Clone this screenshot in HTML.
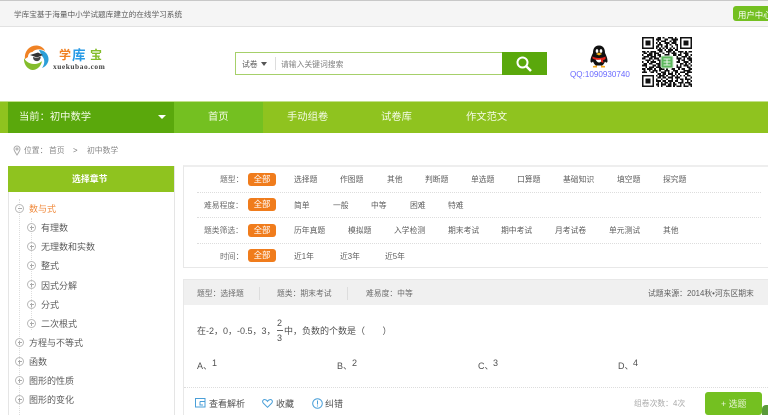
<!DOCTYPE html>
<html lang="zh"><head><meta charset="utf-8"><title>学库宝</title>
<style>
html,body{margin:0;padding:0;background:#fff}
#p{position:relative;width:768px;height:415px;overflow:hidden;background:#fff;font-family:"Liberation Sans","Noto Sans CJK SC",sans-serif;color:#5c5c5c;filter:blur(.3px)}
#p div,#p span,#p svg{position:absolute}
.t{font-size:7.8px;line-height:14px;height:14px;white-space:nowrap;margin-top:.5px}
.k{font-size:9px;color:#5c5c5c}
.f{color:#6c6c6c}
.pill{left:248px;width:28px;height:13px;background:#f07c1c;border-radius:3px;color:#fff;font-size:8.4px;line-height:13px;text-align:center}
.dot{left:197px;width:564px;border-top:1px dotted #ddd;height:0}
.ic{width:7px;height:7px;border:1px solid #bbb;border-radius:50%}
.ic:before{content:"";position:absolute;left:1.5px;right:1.5px;top:3px;height:1px;background:#aaa}
.ic.pl:after{content:"";position:absolute;top:1.5px;bottom:1.5px;left:3px;width:1px;background:#aaa}
.nav{font-size:10.3px;color:#f4fbe6;line-height:14px;top:111px;white-space:nowrap}
</style></head><body><div id="p">

<div style="left:0;top:0;width:768px;height:26px;background:#f5f5f5;border-bottom:1px solid #e2e2e2"></div>
<div style="left:0;top:0;width:768px;height:1px;background:#c8c8c8"></div>
<span class="t" style="left:14px;top:7px;color:#5c5c5c;font-size:7.65px">学库宝基于海量中小学试题库建立的在线学习系统</span>
<div style="left:733px;top:6px;width:40px;height:15px;background:#74c021;border-radius:3px"></div>
<span class="t" style="left:738px;top:7px;color:#fff;font-size:8.4px">用户中心</span>

<svg style="left:22px;top:44px" width="28" height="28" viewBox="0 0 28 28">
<path d="M3 15C2 7 8 1 15 1.500C19 2 22 4 23 7C19 4.500 13 5 10.500 8C8 8 6 10 6 13Z" fill="#f08224"/>
<path d="M17 6C23 6 27 11 26.500 16C26 20 23 23 20 24C23 20 23 15 20 12C19 10 18 8 17 6Z" fill="#2b9fd8"/>
<path d="M2 14C4 18 8 20 12 20C15 20 18 19 20 17C19 23 14 26.500 10 26C5 25 1.500 20 2 14Z" fill="#84bd2c"/>
<path d="M8 11L16 8.500L21 11L15 13.500Z" fill="#333"/><path d="M11 13C11 16 13 17.500 16 17C18 16.500 19 14 18.500 12.500L15 14Z" fill="#444"/>
</svg>
<span style="left:59px;top:47px;font-size:12px;line-height:17px;font-weight:bold;color:#f08224">学</span>
<span style="left:72px;top:47px;font-size:13.500px;line-height:17px;font-weight:bold;color:#2a9be6">库</span>
<span style="left:90px;top:47px;font-size:12px;line-height:17px;font-weight:bold;color:#84bd2c">宝</span>
<span style="left:53px;top:62px;font-family:'Liberation Serif',serif;font-size:7.400px;line-height:9px;font-weight:bold;color:#444;letter-spacing:.55px;white-space:nowrap">xuekubao.com</span>

<div style="left:235px;top:52px;width:267px;height:21px;border:1px solid #a6d06a;background:#fff"></div>
<div style="left:502px;top:52px;width:45px;height:23px;background:#5aa80c"></div>
<span class="t" style="left:242px;top:57px;color:#555">试卷</span>
<div style="left:261px;top:62px;width:0;height:0;border:3.500px solid transparent;border-top:4px solid #555;border-bottom:0"></div>
<div style="left:275px;top:57px;width:1px;height:13px;background:#ddd"></div>
<span class="t" style="left:281px;top:57px;color:#808080">请输入关键词搜索</span>
<svg style="left:515px;top:55px" width="18" height="18" viewBox="0 0 18 18" fill="none" stroke="#fff"><circle cx="7.500" cy="7.500" r="5" stroke-width="2"/><path d="M11 11L16 16" stroke-width="2.500"/></svg>

<svg style="left:589px;top:45px" width="20" height="23" viewBox="0 0 20 23">
<path d="M10 .5C5.500 .5 4 4 4 8C3 10 1.500 13 1.500 16C1.500 18 3 18 4 16.500C5 19 6 20 7 20.500L13 20.500C14 20 15 19 16 16.500C17 18 18.500 18 18.500 16C18.500 13 17 10 16 8C16 4 14.500 .5 10 .5Z" fill="#111"/>
<path d="M6 13C8 19 12 19 14 13Z" fill="#fff"/>
<path d="M3.500 11.500C7 13.500 13 13.500 16.500 11.500L16.500 14C15 15 14.500 15 14 15L14.500 18L12 17L12 14.500C10 15 8 15 6 14.500C5 14.500 4 13.500 3.500 13.500Z" fill="#e2231a"/>
<ellipse cx="8" cy="6" rx="1.300" ry="1.900" fill="#fff"/><ellipse cx="12" cy="6" rx="1.300" ry="1.900" fill="#fff"/>
<path d="M7 9L10 7.500L13 9L10 10.500Z" fill="#f5b31a"/>
<path d="M4 21L8 20.500L8 22.500L4 22.500ZM12 20.500L16 21L16 22.500L12 22.500Z" fill="#f5a81a"/>
</svg>
<span style="left:570px;top:68px;font-size:8.100px;line-height:14px;color:#6a6aff;white-space:nowrap">QQ:1090930740</span>

<svg style="left:642px;top:37px" width="50" height="50" viewBox="0 0 29 29" shape-rendering="crispEdges">
<rect width="29" height="29" fill="#fff"/>
<g fill="none" stroke="#111" stroke-width="1">
<path d="M0 .5h7M9 .5h2M12 .5h1M15 .5h3M19 .5h1M22 .5h7M0 1.500h1M6 1.500h1M8 1.500h3M13 1.500h2M17 1.500h4M22 1.500h1M28 1.500h1M0 2.500h1M2 2.500h3M6 2.500h1M9 2.500h1M11 2.500h3M16 2.500h1M18 2.500h2M22 2.500h1M24 2.500h3M28 2.500h1M0 3.500h1M2 3.500h3M6 3.500h1M8 3.500h1M10 3.500h1M13 3.500h3M17 3.500h3M22 3.500h1M24 3.500h3M28 3.500h1M0 4.500h1M2 4.500h3M6 4.500h1M9 4.500h3M14 4.500h1M16 4.500h1M19 4.500h2M22 4.500h1M24 4.500h3M28 4.500h1M0 5.500h1M6 5.500h1M8 5.500h2M11 5.500h1M13 5.500h2M17 5.500h1M20 5.500h1M22 5.500h1M28 5.500h1M0 6.500h7M8 6.500h1M10 6.500h1M12 6.500h1M14 6.500h1M16 6.500h1M18 6.500h1M20 6.500h1M22 6.500h7"/>
<path d="M9 7.500h3M13 7.500h1M15 7.500h3M19 7.500h2M0 8.500h2M3 8.500h1M5 8.500h3M10 8.500h2M14 8.500h3M18 8.500h1M21 8.500h3M25 8.500h1M27 8.500h2M1 9.500h2M4 9.500h2M7 9.500h3M12 9.500h1M15 9.500h1M17 9.500h3M22 9.500h1M24 9.500h3M0 10.500h1M3 10.500h3M7 10.500h1M9 10.500h2M13 10.500h3M18 10.500h2M21 10.500h2M25 10.500h2M28 10.500h1M1 11.500h3M5 11.500h1M6 11.500h2M10 11.500h1M15 11.500h2M20 11.500h1M23 11.500h3M27 11.500h1M0 12.500h2M4 12.500h2M7 12.500h3M20 12.500h3M24 12.500h1M26 12.500h3M2 13.500h3M6 13.500h1M9 13.500h2M21 13.500h1M23 13.500h2M27 13.500h2M0 14.500h1M3 14.500h1M5 14.500h3M10 14.500h1M20 14.500h2M24 14.500h3M28 14.500h1M1 15.500h2M4 15.500h2M8 15.500h3M22 15.500h2M25 15.500h1M27 15.500h1M0 16.500h3M6 16.500h2M9 16.500h2M20 16.500h1M22 16.500h1M24 16.500h3M28 16.500h1M2 17.500h1M4 17.500h3M8 17.500h3M12 17.500h1M15 17.500h2M20 17.500h3M26 17.500h2M0 18.500h2M3 18.500h3M7 18.500h1M10 18.500h3M14 18.500h1M17 18.500h2M21 18.500h1M23 18.500h2M27 18.500h2M1 19.500h1M4 19.500h1M6 19.500h3M10 19.500h1M13 19.500h3M18 19.500h3M24 19.500h4M0 20.500h3M5 20.500h2M8 20.500h1M11 20.500h3M15 20.500h1M17 20.500h1M19 20.500h2M22 20.500h3M26 20.500h3"/>
<path d="M9 21.500h2M12 21.500h2M15 21.500h3M19 21.500h1M21 21.500h1M25 21.500h2M0 22.500h7M8 22.500h1M10 22.500h3M14 22.500h1M17 22.500h2M20 22.500h1M22 22.500h1M24 22.500h1M26 22.500h2M0 23.500h1M6 23.500h1M9 23.500h2M12 23.500h2M15 23.500h3M19 23.500h3M25 23.500h1M28 23.500h1M0 24.500h1M2 24.500h3M6 24.500h1M8 24.500h1M11 24.500h1M14 24.500h1M17 24.500h1M20 24.500h1M22 24.500h2M25 24.500h3M0 25.500h1M2 25.500h3M6 25.500h1M8 25.500h3M12 25.500h2M15 25.500h3M19 25.500h2M23 25.500h1M26 25.500h1M28 25.500h1M0 26.500h1M2 26.500h3M6 26.500h1M9 26.500h1M11 26.500h1M13 26.500h2M16 26.500h1M18 26.500h1M21 26.500h3M25 26.500h3M0 27.500h1M6 27.500h1M8 27.500h2M11 27.500h3M15 27.500h2M18 27.500h2M22 27.500h1M24 27.500h1M27 27.500h2M0 28.500h7M9 28.500h1M11 28.500h1M14 28.500h3M18 28.500h1M20 28.500h3M24 28.500h3M28 28.500h1"/>
</g>
<rect x="11" y="11" width="7" height="7" rx="1" fill="#5cb85c" stroke="#cfe8cf" stroke-width=".4"/>
<path d="M12.500 12.800h4M12.500 14.500h4M12.500 16.200h4M14.500 12.500v4" stroke="#e6f5e6" stroke-width=".6" fill="none"/>
</svg>

<div style="left:0;top:101px;width:768px;height:32px;background:#8fc31f;border-top:1px solid #c2e08a;box-sizing:border-box"></div>
<div style="left:8px;top:102px;width:166px;height:31px;background:#5aa80c"></div>
<div style="left:174px;top:102px;width:89px;height:31px;background:#74c021"></div>
<span class="nav" style="left:19px">当前：初中数学</span>
<div style="left:158px;top:115px;width:0;height:0;border:4px solid transparent;border-top:4.500px solid #fff;border-bottom:0"></div>
<span class="nav" style="left:208px">首页</span>
<span class="nav" style="left:287px">手动组卷</span>
<span class="nav" style="left:381px">试卷库</span>
<span class="nav" style="left:466px">作文范文</span>

<svg style="left:13px;top:145px" width="8" height="11" viewBox="0 0 8 11" fill="none" stroke="#aaa"><path d="M4 10C2 7 1 5.500 1 4A3 3 0 0 1 7 4C7 5.500 6 7 4 10Z"/><circle cx="4" cy="4" r="1"/></svg>
<span class="t f" style="left:24px;top:143px;color:#888">位置：</span>
<span class="t f" style="left:49px;top:143px;color:#888">首页</span>
<span class="t" style="left:73px;top:143px;color:#777">&gt;</span>
<span class="t f" style="left:87px;top:143px;color:#888">初中数学</span>

<div style="left:8px;top:166px;width:165px;height:260px;border:1px solid #e5e5e5;box-sizing:content-box"></div>
<div style="left:8px;top:166px;width:166px;height:26px;background:#8fc31f"></div>
<span style="left:72px;top:172px;font-size:8.900px;line-height:14px;color:#fff;font-weight:bold;white-space:nowrap">选择章节</span>
<div style="left:19px;top:199px;height:216px;border-left:1px dotted #ddd"></div>
<div style="left:31px;top:218px;height:112px;border-left:1px dotted #ddd"></div>

<div class="ic" style="left:15px;top:204px"></div><span class="t k" style="left:29px;top:201px;color:#f08a3c">数与式</span>
<div class="ic pl" style="left:27px;top:223px"></div><span class="t k" style="left:41px;top:220px">有理数</span>
<div class="ic pl" style="left:27px;top:242px"></div><span class="t k" style="left:41px;top:239px">无理数和实数</span>
<div class="ic pl" style="left:27px;top:261px"></div><span class="t k" style="left:41px;top:258px">整式</span>
<div class="ic pl" style="left:27px;top:280px"></div><span class="t k" style="left:41px;top:278px">因式分解</span>
<div class="ic pl" style="left:27px;top:300px"></div><span class="t k" style="left:41px;top:297px">分式</span>
<div class="ic pl" style="left:27px;top:319px"></div><span class="t k" style="left:41px;top:316px">二次根式</span>
<div class="ic pl" style="left:15px;top:338px"></div><span class="t k" style="left:29px;top:335px">方程与不等式</span>
<div class="ic pl" style="left:15px;top:357px"></div><span class="t k" style="left:29px;top:354px">函数</span>
<div class="ic pl" style="left:15px;top:376px"></div><span class="t k" style="left:29px;top:373px">图形的性质</span>
<div class="ic pl" style="left:15px;top:395px"></div><span class="t k" style="left:29px;top:392px">图形的变化</span>

<div style="left:183px;top:165px;width:590px;height:103px;border:1px solid #e8e8e8;border-top:2px solid #eee;box-sizing:border-box"></div>
<span class="t f" style="left:220px;top:172px">题型：</span>
<div class="pill" style="top:173px">全部</div>
<span class="t" style="left:294px;top:172px">选择题</span><span class="t" style="left:340px;top:172px">作图题</span><span class="t" style="left:387px;top:172px">其他</span><span class="t" style="left:425px;top:172px">判断题</span><span class="t" style="left:471px;top:172px">单选题</span><span class="t" style="left:517px;top:172px">口算题</span><span class="t" style="left:563px;top:172px">基础知识</span><span class="t" style="left:617px;top:172px">填空题</span><span class="t" style="left:663px;top:172px">探究题</span>
<div class="dot" style="top:192px"></div>
<span class="t f" style="left:204px;top:198px">难易程度：</span>
<div class="pill" style="top:198px">全部</div>
<span class="t" style="left:294px;top:198px">简单</span><span class="t" style="left:333px;top:198px">一般</span><span class="t" style="left:371px;top:198px">中等</span><span class="t" style="left:410px;top:198px">困难</span><span class="t" style="left:448px;top:198px">特难</span>
<div class="dot" style="top:217px"></div>
<span class="t f" style="left:204px;top:223px">题类筛选：</span>
<div class="pill" style="top:224px">全部</div>
<span class="t" style="left:294px;top:223px">历年真题</span><span class="t" style="left:348px;top:223px">模拟题</span><span class="t" style="left:394px;top:223px">入学检测</span><span class="t" style="left:448px;top:223px">期末考试</span><span class="t" style="left:501px;top:223px">期中考试</span><span class="t" style="left:555px;top:223px">月考试卷</span><span class="t" style="left:609px;top:223px">单元测试</span><span class="t" style="left:663px;top:223px">其他</span>
<div class="dot" style="top:243px"></div>
<span class="t f" style="left:220px;top:249px">时间：</span>
<div class="pill" style="top:249px">全部</div>
<span class="t" style="left:294px;top:249px">近1年</span><span class="t" style="left:340px;top:249px">近3年</span><span class="t" style="left:385px;top:249px">近5年</span>

<div style="left:183px;top:279px;width:590px;height:150px;border:1px solid #e8e8e8;box-sizing:border-box"></div>
<div style="left:184px;top:280px;width:584px;height:25px;background:#f0f0f0"></div>
<span class="t f" style="left:197px;top:286px">题型：选择题</span>
<div style="left:259px;top:287px;width:1px;height:13px;background:#ddd"></div>
<span class="t f" style="left:277px;top:286px">题类：期末考试</span>
<div style="left:347px;top:287px;width:1px;height:13px;background:#ddd"></div>
<span class="t f" style="left:366px;top:286px">难易度：中等</span>
<span class="t" style="left:648px;top:286px;color:#5c5c5c">试题来源：2014秋•河东区期末</span>

<span class="t k" style="left:197px;top:323px;color:#505050">在-2，0，-0.5，3，</span>
<span class="t k" style="left:277px;top:315px;color:#505050">2</span>
<div style="left:277px;top:330px;width:6px;height:1px;background:#666"></div>
<span class="t k" style="left:277px;top:330px;color:#505050">3</span>
<span class="t k" style="left:284px;top:323px;color:#505050">中，负数的个数是（&nbsp; &nbsp; &nbsp; &nbsp;）</span>

<span class="t k" style="left:197px;top:358px;color:#505050">A、</span><span class="t k" style="left:212px;top:355px;color:#505050">1</span>
<span class="t k" style="left:337px;top:358px;color:#505050">B、</span><span class="t k" style="left:352px;top:355px;color:#505050">2</span>
<span class="t k" style="left:478px;top:358px;color:#505050">C、</span><span class="t k" style="left:493px;top:355px;color:#505050">3</span>
<span class="t k" style="left:618px;top:358px;color:#505050">D、</span><span class="t k" style="left:633px;top:355px;color:#505050">4</span>

<div style="left:184px;top:387px;width:584px;border-top:1px dotted #ddd;height:0"></div>
<svg style="left:195px;top:398px" width="11" height="10" viewBox="0 0 11 10" fill="none" stroke="#4a9fd8"><rect x=".5" y=".5" width="9.500" height="8.500"/><path d="M5 3.500H10M5 3.500V7H8" /></svg>
<span class="t k" style="left:209px;top:396px;color:#505050">查看解析</span>
<svg style="left:262px;top:399px" width="11" height="9" viewBox="0 0 11 9" fill="none" stroke="#4a9fd8"><path d="M5.500 8.300L1.200 4C-.3 2 1.500 .3 3 .6C4.200 .8 5 1.500 5.500 2.400C6 1.500 6.800 .8 8 .6C9.500 .3 11.300 2 9.800 4Z"/></svg>
<span class="t k" style="left:276px;top:396px;color:#505050">收藏</span>
<svg style="left:312px;top:398px" width="11" height="11" viewBox="0 0 11 11" fill="none" stroke="#4a9fd8"><circle cx="5.500" cy="5.500" r="4.800"/><path d="M5.500 2.500V6.500M5.500 7.500V8.500"/></svg>
<span class="t k" style="left:325px;top:396px;color:#505050">纠错</span>
<span class="t" style="left:634px;top:396px;color:#aaa">组卷次数：4次</span>
<div style="left:705px;top:392px;width:57px;height:23px;background:#74c021;border-radius:3px"></div>
<span style="left:721px;top:397px;font-size:8.900px;line-height:14px;color:#eaf6d8;white-space:nowrap">+ 选题</span>
<div style="left:762px;top:405px;width:8px;height:12px;background:#5a9a3a;border-radius:4px 0 0 0"></div>
</div></body></html>
